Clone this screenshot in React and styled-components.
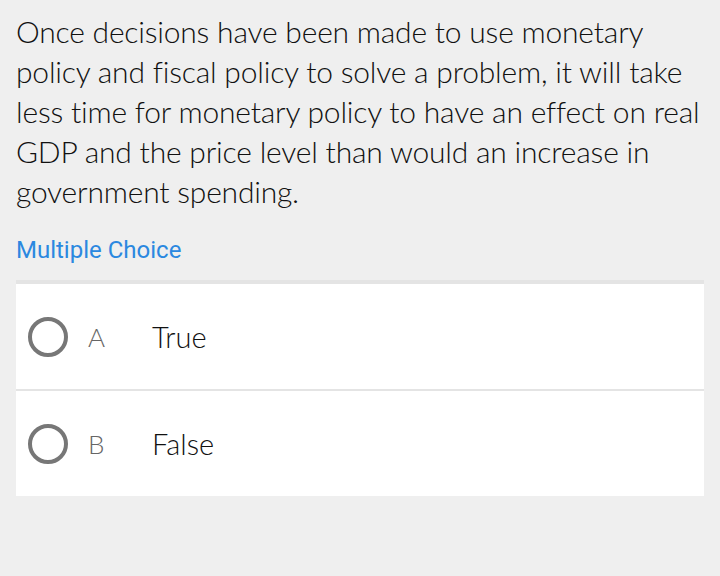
import styled, { createGlobalStyle } from 'styled-components';

const GlobalStyle = createGlobalStyle`
  html, body {
    margin: 0;
    padding: 0;
    background: #efefef;
  }
`;

const Page = styled.div`
  width: 720px;
  min-height: 576px;
  background: #efefef;
  padding: 11px 16px 0 16px;
  box-sizing: border-box;
`;

const Question = styled.p`
  margin: 0;
  font-family: 'Lato', 'Open Sans', sans-serif;
  font-weight: 300;
  font-size: 30px;
  line-height: 40px;
  color: #111;
  letter-spacing: -0.2px;
`;

const TypeLabel = styled.div`
  margin-top: 24px;
  font-family: 'Roboto', sans-serif;
  font-size: 24px;
  color: #2b88e0;
  line-height: 30px;
`;

const Choices = styled.div`
  margin-top: 15px;
  background: #fff;
  border-top: 4px solid #e4e4e4;
`;

const Choice = styled.div`
  display: flex;
  align-items: center;
  height: 105px;
  padding-left: 12px;
  & + & {
    border-top: 2px solid #e4e4e4;
  }
`;

const Radio = styled.span`
  width: 40px;
  height: 40px;
  box-sizing: border-box;
  border: 4px solid #777;
  border-radius: 50%;
  flex-shrink: 0;
`;

const Letter = styled.span`
  width: 64px;
  margin-left: 20px;
  font-family: 'Lato', sans-serif;
  font-weight: 300;
  font-size: 26px;
  color: #666;
`;

const Answer = styled.span`
  font-family: 'Lato', sans-serif;
  font-weight: 300;
  font-size: 29px;
  color: #111;
`;

const choices = [
  { letter: 'A', text: 'True' },
  { letter: 'B', text: 'False' },
];

const App = () => (
  <Page>
    <GlobalStyle />
    <Question>
      Once decisions have been made to use monetary policy and fiscal policy to solve a problem, it will take
      less time for monetary policy to have an effect on real GDP and the price level than would an increase in
      government spending.
    </Question>
    <TypeLabel>Multiple Choice</TypeLabel>
    <Choices>
      {choices.map((c) => (
        <Choice key={c.letter}>
          <Radio />
          <Letter>{c.letter}</Letter>
          <Answer>{c.text}</Answer>
        </Choice>
      ))}
    </Choices>
  </Page>
);

export default App;
